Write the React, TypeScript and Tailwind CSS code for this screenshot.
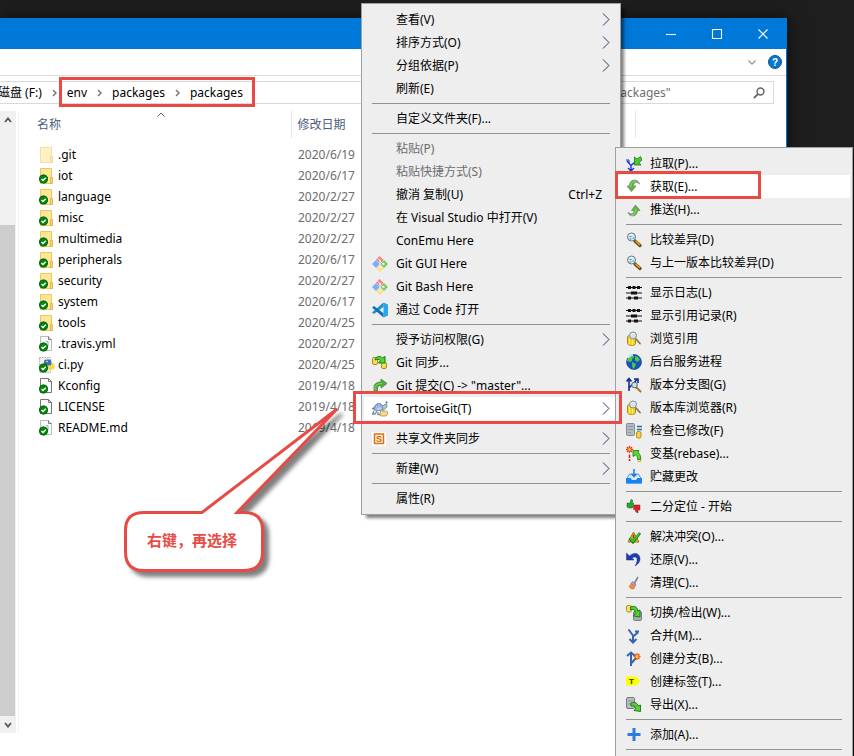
import type { ReactNode } from "react";
import clsx from "clsx";

type IconName =
  | "git" | "vscode" | "sync" | "commit" | "tortoise" | "share"
  | "pull" | "fetch" | "push" | "diff" | "log" | "browse" | "globe" | "graph"
  | "modified" | "rebase" | "stash" | "bisect" | "resolve" | "revert" | "clean"
  | "switch" | "merge" | "branch" | "tag" | "export" | "add";

type MenuEntry =
  | { label: string; icon?: IconName; shortcut?: string; sub?: boolean; disabled?: boolean; active?: boolean }
  | "-";

const contextMenu: MenuEntry[] = [
  { label: "查看(V)", sub: true },
  { label: "排序方式(O)", sub: true },
  { label: "分组依据(P)", sub: true },
  { label: "刷新(E)" },
  "-",
  { label: "自定义文件夹(F)..." },
  "-",
  { label: "粘贴(P)", disabled: true },
  { label: "粘贴快捷方式(S)", disabled: true },
  { label: "撤消 复制(U)", shortcut: "Ctrl+Z" },
  { label: "在 Visual Studio 中打开(V)" },
  { label: "ConEmu Here" },
  { label: "Git GUI Here", icon: "git" },
  { label: "Git Bash Here", icon: "git" },
  { label: "通过 Code 打开", icon: "vscode" },
  "-",
  { label: "授予访问权限(G)", sub: true },
  { label: "Git 同步...", icon: "sync" },
  { label: 'Git 提交(C) -> "master"...', icon: "commit" },
  { label: "TortoiseGit(T)", icon: "tortoise", sub: true, active: true },
  "-",
  { label: "共享文件夹同步", icon: "share", sub: true },
  "-",
  { label: "新建(W)", sub: true },
  "-",
  { label: "属性(R)" },
];

const tortoiseMenu: MenuEntry[] = [
  { label: "拉取(P)...", icon: "pull" },
  { label: "获取(E)...", icon: "fetch", active: true },
  { label: "推送(H)...", icon: "push" },
  "-",
  { label: "比较差异(D)", icon: "diff" },
  { label: "与上一版本比较差异(D)", icon: "diff" },
  "-",
  { label: "显示日志(L)", icon: "log" },
  { label: "显示引用记录(R)", icon: "log" },
  { label: "浏览引用", icon: "browse" },
  { label: "后台服务进程", icon: "globe" },
  { label: "版本分支图(G)", icon: "graph" },
  { label: "版本库浏览器(R)", icon: "browse" },
  { label: "检查已修改(F)", icon: "modified" },
  { label: "变基(rebase)...", icon: "rebase" },
  { label: "贮藏更改", icon: "stash" },
  "-",
  { label: "二分定位 - 开始", icon: "bisect" },
  "-",
  { label: "解决冲突(O)...", icon: "resolve" },
  { label: "还原(V)...", icon: "revert" },
  { label: "清理(C)...", icon: "clean" },
  "-",
  { label: "切换/检出(W)...", icon: "switch" },
  { label: "合并(M)...", icon: "merge" },
  { label: "创建分支(B)...", icon: "branch" },
  { label: "创建标签(T)...", icon: "tag" },
  { label: "导出(X)...", icon: "export" },
  "-",
  { label: "添加(A)...", icon: "add" },
  "-",
];

type FileKind = "hidden" | "folder" | "page" | "sheet" | "python";

const files: { name: string; date: string; kind: FileKind }[] = [
  { name: ".git", date: "2020/6/19", kind: "hidden" },
  { name: "iot", date: "2020/6/17", kind: "folder" },
  { name: "language", date: "2020/2/27", kind: "folder" },
  { name: "misc", date: "2020/2/27", kind: "folder" },
  { name: "multimedia", date: "2020/2/27", kind: "folder" },
  { name: "peripherals", date: "2020/6/17", kind: "folder" },
  { name: "security", date: "2020/2/27", kind: "folder" },
  { name: "system", date: "2020/6/17", kind: "folder" },
  { name: "tools", date: "2020/4/25", kind: "folder" },
  { name: ".travis.yml", date: "2020/2/27", kind: "sheet" },
  { name: "ci.py", date: "2020/4/25", kind: "python" },
  { name: "Kconfig", date: "2019/4/18", kind: "page" },
  { name: "LICENSE", date: "2019/4/18", kind: "page" },
  { name: "README.md", date: "2019/4/18", kind: "sheet" },
];

const icons: Record<IconName, ReactNode> = {
  git: (
    <>
      <path d="M7.5 0 11.5 4 8 7.5 4 3.5Z" fill="#f98080" />
      <path d="M12 4 16 8 12 12 8 8Z" fill="#7cc860" />
      <path d="M4 4 8 8 4 12 0 8Z" fill="#7daefc" />
      <path d="M8 8.5 11.800 12.200 8 16 4.200 12.200Z" fill="#ffdf7c" />
      <path d="M5.500 2 8 4.500V11M8 5l3 3" stroke="#eee" strokeWidth="1" />
      <circle cx="8" cy="4.800" r="1" fill="#eee" />
      <circle cx="11.500" cy="8" r="1.200" fill="#eee" />
      <circle cx="8" cy="11.500" r="1.200" fill="#eee" />
    </>
  ),
  vscode: (
    <>
      <path d="M11.500 0.500 16 2.500V13.500L11.500 15.500Z" fill="#29a5ee" />
      <path d="M11.500 0.500V4.800L2 12 0 10.500Z" fill="#1b8fd6" />
      <path d="M11.500 15.500V11.200L2 4 0 5.500Z" fill="#0875b9" />
    </>
  ),
  sync: (
    <>
      <rect x="0.500" y="2.500" width="5" height="7" rx="1.500" fill="#f9df52" stroke="#a88d28" />
      <rect x="9.500" y="7.500" width="5" height="6" rx="1.500" fill="#f9df52" stroke="#a88d28" />
      <path d="M3 5C4 1 8 0.500 10.500 3L13 1.500V8H6.500L8.500 5.500C7 4 5 4 3 5Z" fill="#59d92c" stroke="#147a17" />
    </>
  ),
  commit: (
    <>
      <path d="M2 14V9C2 6 5 4 9 4V1L15 5.500L9 10V7.500C6 7.500 5.500 9 5.500 11V14Z" fill="#46b62e" stroke="#557953" strokeWidth="0.800" />
      <path d="M3 12V9.500C3.500 7 6 5.500 10 5.500" stroke="#83d66a" />
    </>
  ),
  tortoise: (
    <>
      <path d="M2 9C1 4 7 0 10.500 4.500L11 9.500Z" fill="#8ca7e0" stroke="#6582ba" />
      <path d="M4 5l3 4 3-4M3 8h8M7 3v6" stroke="#d3dcf4" strokeWidth="0.800" />
      <path d="M10 6 12 3.500 15 3.500V6L11.500 9Z" fill="#a9c9ce" stroke="#607f94" strokeWidth="0.700" />
      <path d="M0 7.500H3M2 10l-1.500 3H3l2-3M6 11v2.500h3" stroke="#718ca5" strokeWidth="1.300" />
      <path d="M8.500 10Q8.500 9 10 9.500L11 10h3.500l1 1v2.500L14 15H9l-1-1z" fill="#f8d987" stroke="#ae8850" strokeWidth="0.800" />
      <circle cx="14.500" cy="1.500" r="1" fill="#2c526d" />
    </>
  ),
  share: (
    <>
      <path d="M0 1H14V15H0Z" fill="#fff" />
      <path d="M2.500 3H11.500V12.500H2.500Z" fill="#fff0d8" stroke="#de7210" strokeWidth="1.500" />
      <text x="7" y="11" textAnchor="middle" fontFamily="Liberation Sans" fontWeight="700" fontSize="9" fill="#d65b00">S</text>
    </>
  ),
  pull: (
    <>
      <path d="M1 5 5 9.500V15M9 6 5 9.500M2 12l3 3 3-3" stroke="#1034d8" strokeWidth="1.400" />
      <path d="M0 4h3v3" stroke="#1034d8" />
      <path d="M14.500 0.500 11 3 8.500 1V9H15L13 6.500 16 4Z" fill="#46cb2b" stroke="#277522" strokeWidth="0.800" />
    </>
  ),
  fetch: (
    <>
      <path d="M13.500 5C12-0.500 3.500-0.500 3.500 7H1L5.500 12.500 10 7H7.500C7.500 3 11 2 13.500 5Z" fill="#55b93a" stroke="#7c8a7a" strokeWidth="0.900" />
      <path d="M4.800 8C4.800 4 7 2 10 2" stroke="#9ae47b" />
    </>
  ),
  push: (
    <>
      <path d="M2 10.500C3.500 15.500 11.500 15 11.500 8.500H14L9.500 3 5.500 8.500H8C8 12 5 13 2 10.500Z" fill="#55b93a" stroke="#7c8a7a" strokeWidth="0.900" />
      <path d="M5 13.500C8 13 9.800 11 9.800 7" stroke="#9ae47b" />
    </>
  ),
  diff: (
    <>
      <path d="M9 9 14 13.500" stroke="#69470c" strokeWidth="3.200" strokeLinecap="round" />
      <path d="M9.500 8.800 14 13" stroke="#f5a52a" strokeWidth="1.500" />
      <circle cx="5.500" cy="5" r="4" fill="#cdeefa" stroke="#6e7780" />
      <path d="M3.500 4.500h2M6.500 6h1.500M3.500 7h2" stroke="#498aa7" />
      <path d="M4 2.500h3" stroke="#fff" />
    </>
  ),
  log: (
    <>
      <path d="M0 2.500H16M0 8H16M0 13H16" stroke="#111" />
      <path d="M2 2.500h3M6.500 2.500h3M11 2.500h3M5 8h6M2 13h3M8 13h4" stroke="#111" strokeWidth="3" />
    </>
  ),
  browse: (
    <>
      <path d="M1.500 5.500C1.500 4 9.500 4 9.500 5.500V12.500C9.500 15 1.500 15 1.500 12.500Z" fill="#f7cf1c" stroke="#a98b1d" />
      <path d="M3.500 7.500v6M6.500 8v6" stroke="#fff06a" strokeWidth="1.200" />
      <path d="M10 8 14 12.500" stroke="#8a744e" strokeWidth="1.800" strokeLinecap="round" />
      <circle cx="7" cy="4.500" r="3.500" fill="#cfe4ea" stroke="#858d93" />
      <path d="M5 3.500Q7 1.500 9 3" stroke="#fff" />
    </>
  ),
  globe: (
    <>
      <circle cx="8" cy="8" r="7.500" fill="#1753bd" stroke="#143c77" strokeWidth="0.600" />
      <path d="M1.500 5 4 2l3-1 1 2-2 2v2L4 8 1 7ZM6 8l4 2-1 3-2 2-1-4ZM9 2l3 1 2 3-3 2-2-2Z" fill="#49c842" />
      <path d="M2 4Q4 1 7 1" stroke="#b8edff" strokeWidth="1.500" />
    </>
  ),
  graph: (
    <>
      <path d="M3 14V2M0.500 4.500 3 1.500l2.500 3M3 11l8-8.500M8 2h4v4" stroke="#132a91" strokeWidth="1.600" />
      <path d="M10.500 10.500l4 4" stroke="#a8743a" strokeWidth="2" strokeLinecap="round" />
      <circle cx="8.500" cy="8" r="2.800" fill="#bfe4f0" stroke="#59636b" />
    </>
  ),
  modified: (
    <>
      <rect x="0.500" y="0.500" width="8" height="12" rx="1" fill="#b4bbc0" stroke="#838c92" />
      <path d="M2 3.500h5M2 6.500h5M2 9.500h3" stroke="#8b949a" />
      <path d="M11 3.500h5M11 6.500h5" stroke="#1d72a8" strokeWidth="1.300" />
      <rect x="10.500" y="8.500" width="4.500" height="6.500" rx="1.500" fill="#f9d13c" stroke="#b18d23" />
    </>
  ),
  rebase: (
    <>
      <path d="M3.500 0v7M0 3.500h7M1 1l5 5M6 1 1 6" stroke="#ed3c16" strokeWidth="1.300" />
      <circle cx="3.500" cy="3.500" r="1.300" fill="#ffe04a" />
      <path d="M3.500 8.500V12M3.500 13V15" stroke="#d71919" strokeWidth="1.500" />
      <path d="M11.500 15.500h3v-4" stroke="#e3b82f" strokeWidth="1.500" />
      <path d="M7 4.500H13L12 6.500C14 8 15 10 14.500 13.500H11.500C12 11 11 10 9.500 9L7 10.500Z" fill="#5ed72f" stroke="#187720" strokeWidth="0.800" />
    </>
  ),
  stash: (
    <>
      <path d="M1 9.500 3.500 5H12.500L15 9.500V14H1Z" fill="#d6e9ff" stroke="#4a9df5" />
      <path d="M0 9h4.500l1.500 2h4l1.500-2H16v5.500H0Z" fill="#1683f5" />
      <path d="M8 0v7M5.500 5 8 7.500 10.500 5" stroke="#2475cc" strokeWidth="1.500" />
    </>
  ),
  bisect: (
    <>
      <path d="M1 4H4L5 0.500 6.500 1V4h1V8L6 9H3L1 8Z" fill="#27a52c" stroke="#176a21" strokeWidth="0.500" />
      <path d="M8 6H14V11H12V14L10 13 9 10.500H7.500Z" fill="#db2026" stroke="#8c2022" strokeWidth="0.500" />
    </>
  ),
  resolve: (
    <>
      <path d="M7.500 3 13 13H2Z" fill="#f3b222" stroke="#a67114" />
      <path d="M7.500 5.500v4" stroke="#665016" strokeWidth="1.500" />
      <path d="M3.500 9 7 13 14 4" stroke="#12811c" strokeWidth="2.800" />
      <path d="M4 9 7 12.300 13.500 4.500" stroke="#46d238" strokeWidth="1.200" />
    </>
  ),
  revert: (
    <path
      d="M0.500 1 3.500 4C8-0.500 14 1 14 7C14 10 12 12 9 14C13 8 11 2.500 6 6L8 8H0.500Z"
      fill="#1c3fad"
      stroke="#173389"
      strokeWidth="0.500"
    />
  ),
  clean: (
    <>
      <path d="M12 2 8.500 8" stroke="#7b858e" strokeWidth="1.600" />
      <path d="M6.500 6.500 10 9 9 11.500 5 8.500Z" fill="#a4a0dd" stroke="#635d8f" strokeWidth="0.500" />
      <path d="M5 8.500 9 11.500 8 14H5.500L3 12Z" fill="#f28c38" stroke="#c66f33" strokeWidth="0.500" />
    </>
  ),
  switch: (
    <>
      <rect x="7.500" y="6.500" width="8" height="9" rx="1.500" fill="#a9afb0" stroke="#7b8284" />
      <rect x="0.500" y="0.500" width="5" height="6.500" rx="1.500" fill="#ffe054" stroke="#ad9328" />
      <path d="M4.500 2C9 0 12 3 11.500 6L14 5V12L7.500 11 9 8.500C9.500 5 8 4 4.500 5Z" fill="#55cf2c" stroke="#146e1d" strokeWidth="0.900" />
    </>
  ),
  merge: (
    <path
      d="M2.500 1.500 7 7.500V14M12 4.500 7 8.500M9 3.500h4M3.500 11 7 14.500 10.500 11"
      stroke="#3265a9"
      strokeWidth="2"
    />
  ),
  branch: (
    <>
      <path d="M5 15V2M1 5 5 1.500 9 5M5.500 12 10 7" stroke="#3265a9" strokeWidth="2" />
      <path d="M11 2v7M7.500 5.500h7M8.500 3l5 5M13.500 3l-5 5" stroke="#e85820" strokeWidth="1.300" />
      <circle cx="11" cy="5.500" r="1.500" fill="#ffc72b" />
    </>
  ),
  tag: (
    <>
      <path d="M0 2.500H10.500L14 7 10.500 11.500H0Z" fill="#ff0" />
      <text x="5.500" y="9.500" textAnchor="middle" fontFamily="DejaVu Sans" fontWeight="700" fontSize="7" fill="#36580d">T</text>
    </>
  ),
  export: (
    <>
      <rect x="0.500" y="0.500" width="8" height="11" rx="1.500" fill="#b8bec0" stroke="#727c7e" />
      <path d="M2 4h5M2 7h5" stroke="#8d9597" />
      <path d="M5 6C9 4 12 7 12 9L14.500 8V14.500L8 13.500 9.500 11.500C9.500 9 8 8.500 5 9Z" fill="#58d02f" stroke="#177120" strokeWidth="0.900" />
    </>
  ),
  add: <path d="M8 1v13M1.500 7.500h13" stroke="#2b7be0" strokeWidth="3" />,
};

function Icon({ name }: { name: IconName }) {
  return (
    <svg viewBox="0 0 16 16" className="h-4 w-4" fill="none" aria-hidden="true">
      {icons[name]}
    </svg>
  );
}

function StatusBadge() {
  return (
    <>
      <circle cx="4.500" cy="11" r="4.500" fill="#07860e" />
      <circle cx="4.500" cy="11" r="4" stroke="#05620b" strokeWidth="0.800" />
      <path d="M2.500 11 4 12.500 6.800 9.800" stroke="#fff" strokeWidth="1.400" />
    </>
  );
}

function FileIcon({ kind }: { kind: FileKind }) {
  return (
    <svg viewBox="0 0 16 16" className="h-4 w-4 shrink-0" fill="none" aria-hidden="true">
      {(kind === "folder" || kind === "hidden") && (
        <g opacity={kind === "hidden" ? 0.55 : 1}>
          <path d="M1.500 0.500H12.500V15.500H1.500Z" fill="#ffe699" stroke="#ecca55" />
          <path d="M11.500 9.500h2v6h-2z" fill="#fbd976" stroke="#d9ad38" strokeWidth="0.800" />
        </g>
      )}
      {(kind === "page" || kind === "sheet") && (
        <>
          <path
            d="M1.500 0.500H9.500L12.500 3.500V14.500H1.500Z"
            fill="#fbfbfb"
            stroke={kind === "page" ? "#777" : "#bbb"}
          />
          <path d="M9.500 0.500V3.500H12.500" stroke="#777" />
          {kind === "sheet" && <path d="M7 5.500h2v5" stroke="#8baebc" />}
        </>
      )}
      {kind === "python" && (
        <>
          <path d="M0.500 0.500H11.500V15.500H0.500Z" fill="#eee" stroke="#aaa" strokeDasharray="1.500 1" />
          <path d="M5 7V4.500Q5 2.500 8 2.500H10Q12.500 2.500 12.500 5V7Q12.500 8.500 10.500 8.500H7" fill="#3872a4" />
          <path d="M13 6Q15.500 6 15.500 9V11Q15.500 12.500 13 12.500H8V10.500Q8 9 10 9H12Q13 9 13 7Z" fill="#ffd33d" />
          <circle cx="8" cy="4.500" r="0.800" fill="#fff" />
        </>
      )}
      {kind !== "hidden" && <StatusBadge />}
    </svg>
  );
}

function Menu({ entries, label, className }: { entries: MenuEntry[]; label: string; className: string }) {
  return (
    <div
      role="menu"
      aria-label={label}
      className={clsx(
        "absolute border border-[#a0a0a0] bg-[#eee] px-0.5 py-1 shadow-[4px_4px_3px_-1px_rgba(0,0,0,0.5)]",
        className
      )}
    >
      {entries.map((entry, i) =>
        entry === "-" ? (
          <div key={i} role="separator" className="mx-2 flex h-[7px] items-center">
            <div className="h-px w-full bg-[#919191]" />
          </div>
        ) : (
          <button
            key={i}
            type="button"
            role="menuitem"
            disabled={entry.disabled}
            className={clsx(
              "flex h-[23px] w-full items-center px-2 text-left whitespace-nowrap",
              entry.active && "bg-white",
              entry.disabled ? "text-[#6d6d6d]" : "text-black"
            )}
          >
            <span className="mr-2 h-4 w-4 shrink-0">{entry.icon && <Icon name={entry.icon} />}</span>
            <span className="flex-1">{entry.label}</span>
            {entry.shortcut && <span className="mr-2">{entry.shortcut}</span>}
            {entry.sub && (
              <svg viewBox="0 0 8 14" className="h-3.5 w-2" fill="none" aria-hidden="true">
                <path d="M1 0.500l6 6-6 6" stroke="#2c3a68" />
              </svg>
            )}
          </button>
        )
      )}
    </div>
  );
}

function Crumb() {
  return (
    <svg viewBox="0 0 5 8" className="mx-2.5 h-2 w-[5px] shrink-0" fill="none" aria-hidden="true">
      <path d="M1 1l3 3-3 3" stroke="#777" strokeWidth="1.500" />
    </svg>
  );
}

function TitleBar() {
  const glyphs = [
    { name: "最小化", d: "M0 5.500h10" },
    { name: "最大化", d: "M0.500 0.500h9v9h-9z" },
    { name: "关闭", d: "M0.500 0.500l9 9M9.500 0.500l-9 9" },
  ];
  return (
    <div className="flex h-[31px] shrink-0 justify-end bg-[#0078d7]">
      {glyphs.map((g) => (
        <button key={g.name} type="button" aria-label={g.name} className="flex w-[46px] items-center justify-center">
          <svg viewBox="0 0 10 10" className="h-2.5 w-2.5 overflow-visible" fill="none">
            <path d={g.d} stroke="#fff" strokeWidth="1.100" />
          </svg>
        </button>
      ))}
    </div>
  );
}

function AddressRow() {
  return (
    <div className="flex h-[35px] shrink-0 items-start overflow-hidden pt-[5px] pr-3">
      <nav className="-ml-0.5 flex h-[23px] flex-1 items-center border-y border-[#d9d9d9] whitespace-nowrap">
        <a href="#drive">磁盘 (F:)</a>
        <Crumb />
        <a href="#env">env</a>
        <Crumb />
        <a href="#packages">packages</a>
        <Crumb />
        <a href="#packages-inner">packages</a>
      </nav>
      <div className="ml-3 flex h-[23px] w-[197px] items-center border border-[#d9d9d9] pr-2 pl-1.5">
        <input
          type="text"
          aria-label="搜索"
          placeholder={'搜索"packages"'}
          className="w-full min-w-0 bg-transparent outline-none placeholder:text-[#6d6d6d]"
        />
        <svg viewBox="0 0 12 12" className="h-3 w-3 shrink-0" fill="none" aria-hidden="true">
          <circle cx="7.500" cy="4.500" r="3.400" stroke="#666" strokeWidth="1.500" />
          <path d="M5 7 0.800 11.200" stroke="#666" strokeWidth="1.800" />
        </svg>
      </div>
    </div>
  );
}

function Scrollbar() {
  return (
    <div className="mb-[23px] flex w-4 shrink-0 flex-col bg-[#f0f0f0]">
      <button type="button" aria-label="向上滚动" className="flex h-[17px] items-center justify-center">
        <svg viewBox="0 0 8 6" className="h-1.5 w-2" fill="none">
          <path d="M1 5l3-3.500L7 5" stroke="#555" strokeWidth="1.800" />
        </svg>
      </button>
      <div className="flex flex-1 flex-col pt-[97px]">
        <div className="mr-px flex-1 bg-[#cdcdcd]" />
      </div>
      <button type="button" aria-label="向下滚动" className="flex h-[17px] items-center justify-center">
        <svg viewBox="0 0 8 6" className="h-1.5 w-2" fill="none">
          <path d="M1 1l3 3.500L7 1" stroke="#555" strokeWidth="1.800" />
        </svg>
      </button>
    </div>
  );
}

function FileTable() {
  return (
    <table className="w-full table-fixed border-collapse text-left">
      <thead>
        <tr className="h-[27px] text-[#4c607a]">
          <th className="relative w-[272px] border-r border-[#e5e5e5] p-0 pl-[18px] font-normal">
            名称
            {/* sort direction */}
            <svg viewBox="0 0 8 5" className="absolute top-px left-[138px] h-[5px] w-2" fill="none" aria-hidden="true">
              <path d="M0.500 4.500 4 1l3.500 3.500" stroke="#666" />
            </svg>
          </th>
          <th className="w-[344px] border-r border-[#e5e5e5] p-0 pl-1.5 font-normal">修改日期</th>
          <th className="p-0" />
        </tr>
      </thead>
      <tbody>
        <tr className="h-1.5"><td colSpan={3} className="p-0" /></tr>
        {files.map((file) => (
          <tr key={file.name} className="h-[21px]">
            <td className="p-0 pl-5">
              <span className="flex items-center gap-[3px]">
                <FileIcon kind={file.kind} />
                {file.name}
              </span>
            </td>
            <td className="p-0 pl-[7px] text-[#6d6d6d]">{file.date}</td>
            <td className="p-0" />
          </tr>
        ))}
      </tbody>
    </table>
  );
}

function ExplorerWindow() {
  return (
    <main className="mr-[67px] flex flex-1 flex-col border-r border-[#0078d7] bg-white shadow-[0_0_16px_rgba(0,0,0,0.6)]">
      <TitleBar />
      <div className="flex h-[27px] shrink-0 items-center justify-end gap-3 border-b border-[#dadada] pr-1">
        <button type="button" aria-label="展开功能区">
          <svg viewBox="0 0 8 5" className="h-[5px] w-2" fill="none">
            <path d="M0.500 0.500 4 4l3.500-3.500" stroke="#999" strokeWidth="1.300" />
          </svg>
        </button>
        <button type="button" aria-label="帮助">
          <svg viewBox="0 0 14 14" className="h-3.5 w-3.5">
            <circle cx="7" cy="7" r="6.500" fill="#0b76d0" stroke="#10538e" />
            <text x="7" y="10.500" textAnchor="middle" fontFamily="Liberation Sans" fontWeight="700" fontSize="10" fill="#fff">?</text>
          </svg>
        </button>
      </div>
      <AddressRow />
      <div className="flex flex-1">
        <Scrollbar />
        <div className="mb-[23px] ml-0.5 flex-1 border-l border-[#f2f2f2]">
          <FileTable />
        </div>
      </div>
    </main>
  );
}

function Callout() {
  return (
    <div className="pointer-events-none absolute top-[400px] left-[120px] h-[182px] w-[230px]">
      <svg
        viewBox="0 0 230 182"
        className="absolute inset-0 h-full w-full overflow-visible drop-shadow-[5px_5px_2px_rgba(0,0,0,0.5)]"
        aria-hidden="true"
      >
        <path
          d="M24 112.500H82L217 9 117 112.500H124Q142.500 112.500 142.500 130V152Q142.500 170.500 124 170.500H24Q5.500 170.500 5.500 152V130Q5.500 112.500 24 112.500Z"
          fill="#fff"
          stroke="#e84b45"
          strokeWidth="3"
        />
      </svg>
      <p className="absolute top-[130px] left-[27px] text-[15px] leading-5 font-bold text-[#e84b45]">
        右键，再选择
      </p>
    </div>
  );
}

function Highlight({ className }: { className: string }) {
  return <div className={clsx("pointer-events-none absolute border-3 border-[#e84b45]", className)} />;
}

export default function App() {
  return (
    <div className="relative flex h-screen flex-col overflow-hidden bg-[#1e1e1e] pt-[18px] font-['Noto_Sans','Noto_Sans_CJK_SC',sans-serif] text-xs text-black">
      <ExplorerWindow />
      <Menu entries={contextMenu} label="右键菜单" className="top-[3px] left-[361px] w-[260px]" />
      <Callout />
      <Menu entries={tortoiseMenu} label="TortoiseGit" className="top-[147px] left-[615px] w-[238px]" />
      <Highlight className="top-[77px] left-[59px] h-[30px] w-[196px]" />
      <Highlight className="top-[391px] left-[353px] h-[33px] w-[269px]" />
      <Highlight className="top-[171px] left-[615px] h-7 w-[146px]" />
    </div>
  );
}
